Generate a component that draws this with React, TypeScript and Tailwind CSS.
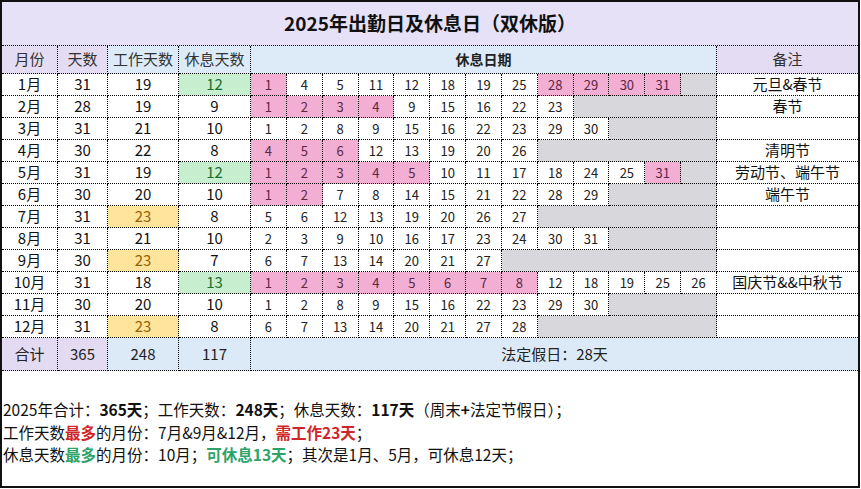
import React from "react";

type Day = number | [number, "p"];

type Row = {
  month: string;
  days: number;
  work: number;
  rest: number;
  workTone?: "yellow";
  restTone?: "green";
  dates: Day[];
  note?: string;
};

const rows: Row[] = [
  { month: "1月", days: 31, work: 19, rest: 12, restTone: "green", dates: [[1, "p"], 4, 5, 11, 12, 18, 19, 25, [28, "p"], [29, "p"], [30, "p"], [31, "p"]], note: "元旦&春节" },
  { month: "2月", days: 28, work: 19, rest: 9, dates: [[1, "p"], [2, "p"], [3, "p"], [4, "p"], 9, 15, 16, 22, 23], note: "春节" },
  { month: "3月", days: 31, work: 21, rest: 10, dates: [1, 2, 8, 9, 15, 16, 22, 23, 29, 30] },
  { month: "4月", days: 30, work: 22, rest: 8, dates: [[4, "p"], [5, "p"], [6, "p"], 12, 13, 19, 20, 26], note: "清明节" },
  { month: "5月", days: 31, work: 19, rest: 12, restTone: "green", dates: [[1, "p"], [2, "p"], [3, "p"], [4, "p"], [5, "p"], 10, 11, 17, 18, 24, 25, [31, "p"]], note: "劳动节、端午节" },
  { month: "6月", days: 30, work: 20, rest: 10, dates: [[1, "p"], [2, "p"], 7, 8, 14, 15, 21, 22, 28, 29], note: "端午节" },
  { month: "7月", days: 31, work: 23, workTone: "yellow", rest: 8, dates: [5, 6, 12, 13, 19, 20, 26, 27] },
  { month: "8月", days: 31, work: 21, rest: 10, dates: [2, 3, 9, 10, 16, 17, 23, 24, 30, 31] },
  { month: "9月", days: 30, work: 23, workTone: "yellow", rest: 7, dates: [6, 7, 13, 14, 20, 21, 27] },
  { month: "10月", days: 31, work: 18, rest: 13, restTone: "green", dates: [[1, "p"], [2, "p"], [3, "p"], [4, "p"], [5, "p"], [6, "p"], [7, "p"], [8, "p"], 12, 18, 19, 25, 26], note: "国庆节&&中秋节" },
  { month: "11月", days: 30, work: 20, rest: 10, dates: [1, 2, 8, 9, 15, 16, 22, 23, 29, 30] },
  { month: "12月", days: 31, work: 23, workTone: "yellow", rest: 8, dates: [6, 7, 13, 14, 20, 21, 27, 28] },
];

const cell = "flex items-center justify-center border-r border-b border-dotted border-black";

function DataRow({ row }: { row: Row }) {
  const gray = 13 - row.dates.length;
  return (
    <div className="flex h-[22px] text-[15px] text-[#111]">
      <div className={`${cell} w-[56px]`}>{row.month}</div>
      <div className={`${cell} w-[50px]`}>{row.days}</div>
      <div className={`${cell} w-[71px] ${row.workTone === "yellow" ? "bg-[#fee59b] text-[#9a5f06]" : ""}`}>{row.work}</div>
      <div className={`${cell} w-[72px] ${row.restTone === "green" ? "bg-[#c7eece] text-[#1e6f2e]" : ""}`}>{row.rest}</div>
      {row.dates.map((d, i) => {
        const pink = Array.isArray(d);
        const n = pink ? d[0] : d;
        return (
          <div
            key={i}
            className={`${cell} w-[35.85px] text-[13px] ${pink ? "bg-[#f2aed3] text-[#5b2745]" : "text-[#222]"}`}
          >
            {n}
          </div>
        );
      })}
      {gray > 0 && <div className={`${cell} flex-1 bg-[#d7d7dc]`} />}
      <div className="flex w-[141px] items-center justify-center border-b border-dotted border-black">{row.note}</div>
    </div>
  );
}

export default function App() {
  return (
    <div className="h-[489px] w-[861px] bg-white font-['Noto_Sans_CJK_SC',sans-serif]">
      <div className="flex h-[488px] w-[860px] flex-col border-2 border-[#111]">
        <div className="flex h-[44px] items-center justify-center border-b border-dotted border-black bg-[#e6e1f7] text-[19px] font-bold text-[#111]">
          2025年出勤日及休息日（双休版）
        </div>

        <div className="flex h-[28px] text-[15px] text-[#333]">
          <div className={`${cell} w-[56px] bg-[#e3dcf3]`}>月份</div>
          <div className={`${cell} w-[50px] bg-[#e3dcf3]`}>天数</div>
          <div className={`${cell} w-[71px] bg-[#dcebf7]`}>工作天数</div>
          <div className={`${cell} w-[72px] bg-[#dcebf7]`}>休息天数</div>
          <div className={`${cell} flex-1 bg-[#dcebf7] text-[14px] font-bold text-[#222]`}>休息日期</div>
          <div className="flex w-[141px] items-center justify-center border-b border-dotted border-black bg-[#e3dcf3]">备注</div>
        </div>

        {rows.map((r) => (
          <DataRow key={r.month} row={r} />
        ))}

        <div className="flex h-[33px] text-[15px] text-[#222]">
          <div className={`${cell} w-[56px] bg-[#e2dbf2]`}>合计</div>
          <div className={`${cell} w-[50px] bg-[#e2dbf2]`}>365</div>
          <div className={`${cell} w-[71px] bg-[#dbeaf6]`}>248</div>
          <div className={`${cell} w-[72px] bg-[#dbeaf6]`}>117</div>
          <div className="flex flex-1 items-center justify-center border-b border-dotted border-black bg-[#dbeaf6]">
            法定假日：28天
          </div>
        </div>

        <div className="flex-1 pl-px pt-[27px] text-[15.5px] leading-[22.5px] text-[#111]">
          <p>
            2025年合计：<b>365天</b>；工作天数：<b>248天</b>；休息天数：<b>117天</b>（周末<b>+</b>法定节假日）；
          </p>
          <p>
            工作天数<b className="text-[#d0262a]">最多</b>的月份：7月&amp;9月&amp;12月，
            <b className="text-[#d0262a]">需工作23天</b>；
          </p>
          <p>
            休息天数<b className="text-[#2ea368]">最多</b>的月份：10月；<b className="text-[#2ea368]">可休息13天</b>；其次是1月、5月，可休息12天；
          </p>
        </div>
      </div>
    </div>
  );
}
